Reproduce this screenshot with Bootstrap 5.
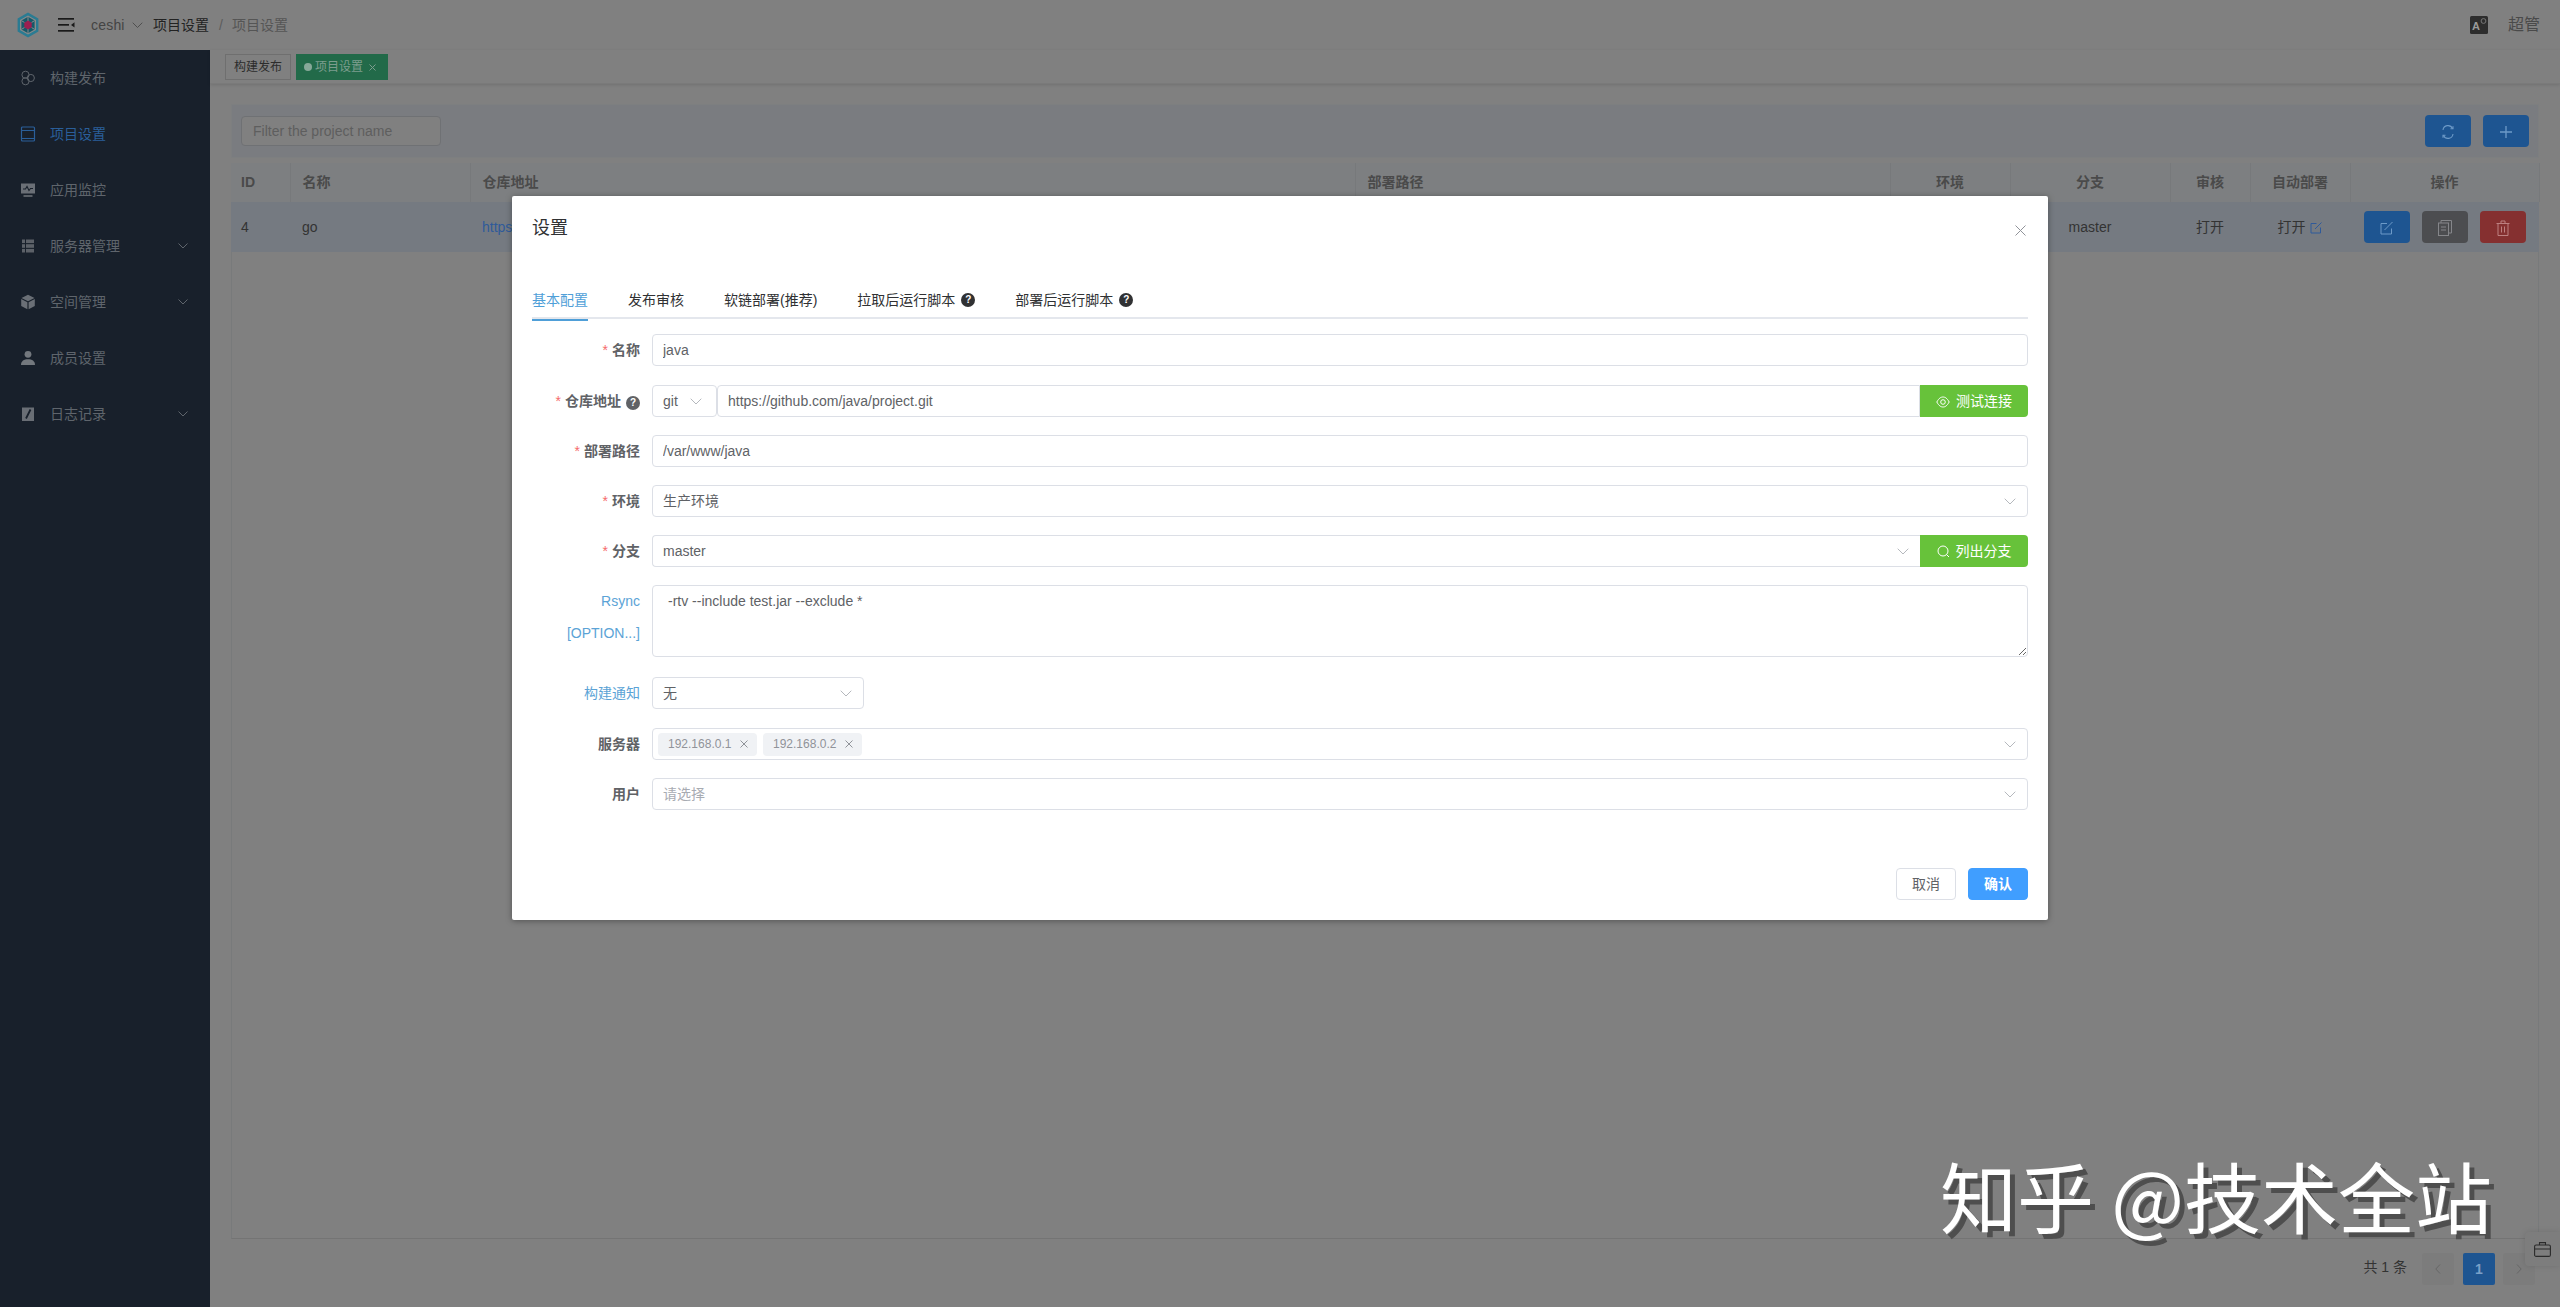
<!DOCTYPE html>
<html lang="zh-CN">
<head>
<meta charset="utf-8">
<title>项目设置</title>
<link href="https://cdn.jsdelivr.net/npm/bootstrap@5.3.0/dist/css/bootstrap.min.css" rel="stylesheet">
<style>
html,body{height:100%;}
body{font-family:"Liberation Sans","Noto Sans CJK SC",sans-serif;font-size:14px;background:#808080;color:#333;overflow:hidden;width:2560px;height:1307px;position:relative;}
.topbar{height:50px;padding-left:17px;}
.logo-box{width:22px;height:26px;margin-right:19px;}
.fold-box{width:17px;height:14px;margin-right:16px;}
.org{color:#444;width:33px;letter-spacing:.2px;}
.crumb-a{color:#222;margin-left:10px;}
.crumb-sep{color:#5c5c5c;margin:0 9px 0 10px;}
.crumb-b{color:#555;}
.top-right{padding-right:20px;}
.lang-ico{margin-right:20px;}
.who{font-size:16px;color:#4a4a4a;}
.side{width:210px;background:#18202b;flex:none;height:1257px;}
.side-link{height:56px;padding:0 22px 0 20px;color:#5f656c;font-size:14px;}
.side-link svg.ico{width:16px;height:16px;margin-right:14px;flex:none;}
.side-link.on{color:#2a5f9a;}
.side-link .lab{flex:1;}
.mainwrap{min-width:0;height:1257px;}
.tagbar{height:34px;padding:4px 15px 0;border-bottom:1px solid #7a7a7a;box-shadow:0 1px 3px rgba(0,0,0,.12);gap:5px;}
.tg{height:26px;font-size:12px;padding:0 8px;border:1px solid #6f6f6f;color:#2c2c2c;}
.tg.on{background:#226a49;border-color:#226a49;color:#7d9d8e;padding:0 11px 0 7px;}
.tg .dt{width:8px;height:8px;border-radius:50%;background:#86a898;margin-right:3px;}
.tg svg{margin-left:6px;}
.work{padding:20px 21px 0;flex:1;min-height:0;}
.tools{height:54px;background:#7a7c80;padding:0 9px;border:1px solid #7d7f80;}
.filter.form-control{width:200px;height:30px;background:#808080;border:1px solid #6f7174;border-radius:4px;font-size:14px;padding:0 11px;color:#4f4f4f;box-shadow:none;}
.filter::placeholder{color:#5e5e5e;opacity:1;}
.tool-btns{gap:12px;}
.ibtn{width:46px;height:32px;border:0;border-radius:4px;padding:0;}
.b-blue{background:#1e5591;}
.b-gray{background:#4c4d50;}
.b-red{background:#853030;}
.tablebox{margin-top:5px;flex:1;min-height:0;border:1px solid #787a7b;border-bottom-color:#747474;border-top:0;}
.grid-t{table-layout:fixed;width:2308px;margin:0 0 0 -1px;--bs-table-bg:transparent;--bs-table-color:#333;}
.grid-t th{height:39px;background:#7d7f81;color:#4a4a4a;font-weight:700;font-size:14px;padding:0 12px;border:0;border-right:1px solid #77797b;vertical-align:middle;}
.grid-t td{height:50px;background:#757a81;color:#333;font-size:14px;padding:0 12px;border:0;vertical-align:middle;}
.grid-t a{color:#2f5a9a;text-decoration:none;}
.grid-t .first{padding-left:10px;}
.row-acts{gap:12px;}
.pager{height:68px;padding:14px 4px 0 0;}
.pg-total{color:#333;margin-right:15px;}
.pg-btn{width:32px;height:32px;border-radius:2px;background:#7c7c7c;color:#5e5e5e;}
.pg-btn.on{background:#1e5591;color:#7aa0c8;font-weight:700;margin:0 8px 0 9px;}
.mark-text{position:absolute;left:1940px;top:1141px;font-family:"Noto Sans CJK SC",sans-serif;font-size:77px;line-height:1.4;font-weight:400;color:#fff;text-shadow:5px 5px 0 #4e4e4e;white-space:nowrap;z-index:1060;}
.dock{position:absolute;right:0;top:1232px;width:35px;height:34px;background:#7d7d7d;border-radius:4px 0 0 4px;box-shadow:0 0 6px rgba(0,0,0,.12);z-index:5;}
.modal.shown{position:absolute;overflow:visible;height:auto;width:2560px;top:0;left:0;z-index:1050;}
.modal-dialog.setbox{max-width:1536px;width:1536px;margin:196px auto 0;}
.setbox .modal-content{border:0;border-radius:2px;box-shadow:0 1px 6px rgba(0,0,0,.35);}
.setbox .modal-header{border:0;padding:20px 20px 0;height:64px;align-items:flex-start;}
.setbox .modal-title{font-size:18px;line-height:24px;color:#303133;font-weight:400;}
.x-close{background:none;border:0;padding:0;line-height:1;margin-top:6px;margin-right:2px;}
.setbox .modal-body{padding:18px 20px 30px;}
.tabline{height:41px;border-bottom:2px solid #e4e7ed;margin-bottom:15px;flex-wrap:nowrap;}
.tabline .tb{height:41px;margin-right:40px;padding-top:3px;color:#303133;font-size:14px;display:flex;align-items:center;position:relative;}
.tabline .tb.on{color:#4f9fd8;}
.tabline .tb.on::after{content:"";position:absolute;left:0;right:0;bottom:-2px;height:2px;background:#4f9fd8;}
.qm{display:inline-flex;align-items:center;justify-content:center;width:14px;height:14px;border-radius:50%;background:#303133;color:#fff;font-size:10px;font-weight:700;margin-left:6px;line-height:1;}
.qm.soft{background:#606266;margin-left:5px;}
.frow{margin-bottom:18px;min-height:32px;}
.frow.gap19{margin-bottom:19px;}
.frow.gap20{margin-bottom:20px;}
.flab{width:120px;flex:none;text-align:right;padding-right:12px;line-height:32px;font-weight:700;color:#606266;white-space:nowrap;}
.flab.lk{font-weight:400;color:#5ba3d6;}
.req{color:#f56c6c;font-weight:400;margin-right:4px;}
.fld.form-control{height:32px;border:1px solid #dcdfe6;border-radius:4px;font-size:14px;line-height:30px;padding:0 11px 0 10px;color:#606266;box-shadow:none;background:#fff;}
.area.form-control{height:72px;min-height:72px;border:1px solid #dcdfe6;border-radius:4px;font-size:14px;line-height:21px;padding:5px 15px;color:#606266;box-shadow:none;}
.fill{flex:1;min-width:0;}
.fld.gitsel{width:65px;flex:none;padding-right:14px;}
.fld.pl-tail{border-radius:4px 0 0 4px;}
.fld.brsel{border-radius:4px 0 0 4px;border-right:0;}
.gbtn{width:108px;height:32px;flex:none;background:#67c23a;border:0;border-radius:0 4px 4px 0;color:#fff;font-size:14px;padding:0;}
.gbtn svg{margin-right:6px;}
.tinysel{width:212px;flex:none;}
.chip{height:23px;width:99px;background:#f0f2f5;border-radius:4px;color:#909399;font-size:12px;padding-left:10px;margin-right:6px;}
.chip svg{margin-left:9px;}
.fld.chips{padding-left:5px;}
.ph{color:#a8abb2;}
.setbox .modal-footer{border:0;padding:10px 20px 20px;gap:12px;}
.setbox .modal-footer>*{margin:0;}
.bt-plain,.bt-ok{width:60px;height:32px;font-size:14px;padding:0;border-radius:4px;}
.bt-plain{background:#fff;border:1px solid #dcdfe6;color:#606266;}
.bt-ok{background:#409eff;border:1px solid #409eff;color:#fff;font-weight:700;}
</style>
</head>
<body>

<header class="topbar d-flex align-items-center">
  <svg class="logo-box" viewBox="0 0 22 26">
    <path d="M11 .6 21.400 6.500V19.500L11 25.400.6 19.500V6.500Z" fill="#2a7b92"/>
    <path d="M11 3.400 19 8V18L11 22.600 3 18V8Z" fill="#8a8a8a"/>
    <path d="M11 4.800 17.600 8.600V17.400L11 21.200 4.400 17.400V8.600Z" fill="#17596a"/>
    <path d="M11 4.800V9M17.600 8.600 14.500 10.500M17.600 17.400 14.500 15.500M11 21.200V17M4.400 17.400 7.500 15.500M4.400 8.600 7.500 10.500" stroke="#8a8a8a" stroke-width="1"/>
    <path d="M11 8.600 14.700 10.800V15.200L11 17.400 7.300 15.200V10.800Z" fill="#9c1f50"/>
  </svg>
  <svg class="fold-box" viewBox="0 0 17 14" fill="#1a1a1a"><rect width="16" height="1.700"/><rect y="6" width="11" height="1.700"/><rect y="12" width="16" height="1.700"/><path d="M16.500 4.200V9.500L13 6.900Z"/></svg>
  <span class="org">ceshi</span>
  <svg width="11" height="7" viewBox="0 0 11 7" class="ms-2" fill="none" stroke="#4f4f4f"><path d="M.7.700 5.500 5.500 10.300.7"/></svg>
  <span class="crumb-a">项目设置</span><span class="crumb-sep">/</span><span class="crumb-b">项目设置</span>
  <div class="top-right ms-auto d-flex align-items-center">
    <svg class="lang-ico" width="18" height="18" viewBox="0 0 18 18"><rect width="18" height="18" rx="1.500" fill="#2d2d2d"/><text x="2" y="14" font-family="Liberation Sans" font-size="11" font-weight="700" fill="#9a9a9a">A</text><circle cx="13.500" cy="5" r="2.400" fill="none" stroke="#777" stroke-width="1"/></svg>
    <span class="who">超管</span>
  </div>
</header>

<div class="d-flex">
  <nav class="side nav flex-column flex-nowrap">
    <a class="side-link d-flex align-items-center nav-link" href="#"><svg class="ico" viewBox="0 0 16 16" fill="none" stroke="#5f656c"><circle cx="5.500" cy="4.800" r="3.600"/><circle cx="5.500" cy="11.200" r="3.600"/><circle cx="10.800" cy="8" r="3.600"/></svg><span class="lab">构建发布</span></a>
    <a class="side-link on d-flex align-items-center nav-link" href="#"><svg class="ico" viewBox="0 0 16 16" fill="none" stroke="#2a5f9a" stroke-width="1.200"><rect x="1.500" y="1" width="13" height="14" rx="1"/><path d="M1.500 4.500H14.500M1.500 12.500H14.500"/></svg><span class="lab">项目设置</span></a>
    <a class="side-link d-flex align-items-center nav-link" href="#"><svg class="ico" viewBox="0 0 16 16"><path d="M1 1.500H15V11.500H1Z" fill="#6a6f76"/><path d="M3 7H5.500L7 4.500 9 8.500 10.500 6.500H13" fill="none" stroke="#18202b" stroke-width="1.100"/><rect x="3.500" y="13.200" width="9" height="1.600" fill="#6a6f76"/></svg><span class="lab">应用监控</span></a>
    <a class="side-link d-flex align-items-center nav-link" href="#"><svg class="ico" viewBox="0 0 16 16" fill="#5c6168"><rect x="2" y="1.500" width="3" height="3.600"/><rect x="6" y="1.500" width="8" height="3.600"/><rect x="2" y="6.200" width="3" height="3.600"/><rect x="6" y="6.200" width="8" height="3.600"/><rect x="2" y="10.900" width="3" height="3.600"/><rect x="6" y="10.900" width="8" height="3.600"/></svg><span class="lab">服务器管理</span><svg width="10" height="6" viewBox="0 0 10 6" fill="none" stroke="#5f656c"><path d="M.5.500 5 5 9.500.5"/></svg></a>
    <a class="side-link d-flex align-items-center nav-link" href="#"><svg class="ico" viewBox="0 0 16 16" fill="#6a6f76"><path d="M8 .8 14.500 4 8 7.200 1.500 4Z"/><path d="M1.200 5.100 7.400 8.300V15.200L1.200 12Z"/><path d="M14.800 5.100 8.600 8.300V15.200L14.800 12Z"/></svg><span class="lab">空间管理</span><svg width="10" height="6" viewBox="0 0 10 6" fill="none" stroke="#5f656c"><path d="M.5.500 5 5 9.500.5"/></svg></a>
    <a class="side-link d-flex align-items-center nav-link" href="#"><svg class="ico" viewBox="0 0 16 16" fill="#73787e"><circle cx="8" cy="4.300" r="3.400"/><path d="M1 15C1 11 4 9.300 8 9.300S15 11 15 15Z"/></svg><span class="lab">成员设置</span></a>
    <a class="side-link d-flex align-items-center nav-link" href="#"><svg class="ico" viewBox="0 0 16 16"><rect x="2" y="1.500" width="12" height="13.500" fill="#696e75"/><path d="M10.500 3.500 6 12.500" stroke="#18202b" stroke-width="1.800"/></svg><span class="lab">日志记录</span><svg width="10" height="6" viewBox="0 0 10 6" fill="none" stroke="#5f656c"><path d="M.5.500 5 5 9.500.5"/></svg></a>
  </nav>

  <main class="mainwrap flex-grow-1 d-flex flex-column">
    <div class="tagbar d-flex align-items-start">
      <div class="tg d-flex align-items-center">构建发布</div>
      <div class="tg on d-flex align-items-center"><span class="dt"></span>项目设置<svg width="7" height="7" viewBox="0 0 7 7" stroke="#7d9d8e" fill="none"><path d="M.5.500 6.500 6.500M6.500.5.500 6.500"/></svg></div>
    </div>
    <div class="work d-flex flex-column">
      <div class="tools d-flex align-items-center justify-content-between">
        <input class="filter form-control" type="text" placeholder="Filter the project name">
        <div class="tool-btns d-flex">
          <button class="ibtn b-blue" aria-label="刷新"><svg width="14" height="16" viewBox="0 0 14 16" fill="none" stroke="#6d9ac8" stroke-width="1.100"><path d="M2 6A5 5 0 0 1 11.500 4.500M12 10A5 5 0 0 1 2.500 11.500"/><path d="M9.500 4.800H12V2.200M4.500 11.200H2V13.800"/></svg></button>
          <button class="ibtn b-blue" aria-label="新增"><svg width="14" height="14" viewBox="0 0 14 14" stroke="#6d9ac8" stroke-width="1.300"><path d="M7 1V13M1 7H13"/></svg></button>
        </div>
      </div>
      <div class="tablebox d-flex flex-column">
        <table class="table grid-t">
          <colgroup><col width="59"><col width="180"><col width="885"><col width="535"><col width="120"><col width="160"><col width="80"><col width="100"><col width="189"></colgroup>
          <thead><tr>
            <th class="first">ID</th><th>名称</th><th>仓库地址</th><th>部署路径</th><th class="text-center">环境</th><th class="text-center">分支</th><th class="text-center">审核</th><th class="text-center">自动部署</th><th class="text-center">操作</th>
          </tr></thead>
          <tbody><tr>
            <td class="first">4</td><td>go</td><td><a href="#">https</a></td><td></td><td></td><td class="text-center">master</td><td class="text-center">打开</td>
            <td class="text-center">打开<svg width="13" height="13" viewBox="0 0 13 13" fill="none" stroke="#2f5a9a" class="ms-1"><path d="M10.500 6.500V12H1V2.500H6.500"/><path d="M5 8 11.500 1.500"/></svg></td>
            <td><div class="row-acts d-flex justify-content-center">
              <button class="ibtn b-blue" aria-label="编辑"><svg width="14" height="14" viewBox="0 0 14 14" fill="none" stroke="#6d9ac8"><path d="M11.500 7.500V13H1V2.500H7"/><path d="M4.500 9 12.500 1"/></svg></button>
              <button class="ibtn b-gray" aria-label="复制"><svg width="14" height="16" viewBox="0 0 14 16" fill="none" stroke="#85868a"><rect x=".5" y="3" width="10" height="12.500"/><path d="M3 3V.5H13.500V13H10.500M3 7H8M3 10H8"/></svg></button>
              <button class="ibtn b-red" aria-label="删除"><svg width="14" height="16" viewBox="0 0 14 16" fill="none" stroke="#bd8080"><path d="M.5 3.500H13.500M5 3.500V1H9V3.500M2 3.500V15.500H12V3.500M5.500 6.500V12.500M8.500 6.500V12.500"/></svg></button>
            </div></td>
          </tr></tbody>
        </table>
      </div>
      <div class="pager d-flex justify-content-end align-items-start">
        <span class="pg-total lh-lg">共 1 条</span>
        <div class="pg-btn d-flex align-items-center justify-content-center"><svg width="6" height="10" viewBox="0 0 6 10" fill="none" stroke="#666"><path d="M5 .5.800 5 5 9.500"/></svg></div>
        <div class="pg-btn on d-flex align-items-center justify-content-center">1</div>
        <div class="pg-btn d-flex align-items-center justify-content-center"><svg width="6" height="10" viewBox="0 0 6 10" fill="none" stroke="#666"><path d="M1 .5 5.200 5 1 9.500"/></svg></div>
      </div>
    </div>
  </main>
</div>

<div class="dock d-flex align-items-center justify-content-center">
  <svg width="17" height="15" viewBox="0 0 17 15" fill="none" stroke="#2b2b2b" stroke-width="1.100"><rect x=".6" y="3" width="15.800" height="11.400" rx="1.500"/><path d="M5.500 3V.6H11.500V3M.6 7H16.400"/></svg>
</div>

<div class="modal shown d-block" tabindex="-1">
  <div class="modal-dialog setbox">
    <div class="modal-content">
      <div class="modal-header justify-content-between">
        <h5 class="modal-title">设置</h5>
        <button class="x-close" aria-label="关闭"><svg width="11" height="11" viewBox="0 0 11 11" stroke="#909399" fill="none"><path d="M.5.500 10.500 10.500M10.500.5.500 10.500"/></svg></button>
      </div>
      <div class="modal-body">
        <div class="tabline nav">
          <div class="tb on">基本配置</div>
          <div class="tb">发布审核</div>
          <div class="tb">软链部署(推荐)</div>
          <div class="tb">拉取后运行脚本<span class="qm">?</span></div>
          <div class="tb">部署后运行脚本<span class="qm">?</span></div>
        </div>

        <div class="frow gap19 d-flex"><div class="flab"><span class="req">*</span>名称</div><input class="fld form-control fill" value="java"></div>

        <div class="frow d-flex"><div class="flab"><span class="req">*</span>仓库地址<span class="qm soft">?</span></div>
          <div class="fill d-flex">
            <div class="fld form-control gitsel d-flex align-items-center justify-content-between">git<svg width="12" height="7" viewBox="0 0 12 7" fill="none" stroke="#b5b8bd"><path d="M.7.700 6 6 11.300.7"/></svg></div>
            <input class="fld form-control pl-tail fill" value="https://github.com/java/project.git">
            <button class="gbtn"><svg width="14" height="12" viewBox="0 0 14 12" fill="none" stroke="#fff"><path d="M.8 6C3 2 5 1 7 1s4 1 6.200 5C11 10 9 11 7 11S3 10 .8 6Z"/><circle cx="7" cy="6" r="2.300"/></svg>测试连接</button>
          </div>
        </div>

        <div class="frow d-flex"><div class="flab"><span class="req">*</span>部署路径</div><input class="fld form-control fill" value="/var/www/java"></div>

        <div class="frow d-flex"><div class="flab"><span class="req">*</span>环境</div>
          <div class="fld form-control fill d-flex align-items-center justify-content-between">生产环境<svg width="12" height="7" viewBox="0 0 12 7" fill="none" stroke="#b5b8bd"><path d="M.7.700 6 6 11.300.7"/></svg></div>
        </div>

        <div class="frow d-flex"><div class="flab"><span class="req">*</span>分支</div>
          <div class="fill d-flex">
            <div class="fld form-control brsel fill d-flex align-items-center justify-content-between">master<svg width="12" height="7" viewBox="0 0 12 7" fill="none" stroke="#b5b8bd"><path d="M.7.700 6 6 11.300.7"/></svg></div>
            <button class="gbtn"><svg width="13" height="13" viewBox="0 0 13 13" fill="none" stroke="#fff"><circle cx="6" cy="6" r="5"/><path d="M9.500 9.500 12 12"/></svg>列出分支</button>
          </div>
        </div>

        <div class="frow gap20 d-flex"><div class="flab lk">Rsync<br>[OPTION...]</div><textarea class="area form-control fill">-rtv --include test.jar --exclude *</textarea></div>

        <div class="frow gap19 d-flex"><div class="flab lk">构建通知</div>
          <div class="fld form-control tinysel d-flex align-items-center justify-content-between">无<svg width="12" height="7" viewBox="0 0 12 7" fill="none" stroke="#b5b8bd"><path d="M.7.700 6 6 11.300.7"/></svg></div>
        </div>

        <div class="frow d-flex"><div class="flab">服务器</div>
          <div class="fld chips form-control fill d-flex align-items-center">
            <span class="chip d-flex align-items-center">192.168.0.1<svg width="8" height="8" viewBox="0 0 8 8" stroke="#909399" fill="none"><path d="M.5.500 7.500 7.500M7.500.5.500 7.500"/></svg></span>
            <span class="chip d-flex align-items-center">192.168.0.2<svg width="8" height="8" viewBox="0 0 8 8" stroke="#909399" fill="none"><path d="M.5.500 7.500 7.500M7.500.5.500 7.500"/></svg></span>
            <svg class="ms-auto" width="12" height="7" viewBox="0 0 12 7" fill="none" stroke="#b5b8bd"><path d="M.7.700 6 6 11.300.7"/></svg>
          </div>
        </div>

        <div class="frow d-flex"><div class="flab">用户</div>
          <div class="fld form-control fill d-flex align-items-center justify-content-between"><span class="ph">请选择</span><svg width="12" height="7" viewBox="0 0 12 7" fill="none" stroke="#b5b8bd"><path d="M.7.700 6 6 11.300.7"/></svg></div>
        </div>
      </div>
      <div class="modal-footer">
        <button class="bt-plain">取消</button>
        <button class="bt-ok">确认</button>
      </div>
    </div>
  </div>
</div>

<div class="mark-text">知乎 @技术全站</div>

<script src="https://cdn.jsdelivr.net/npm/bootstrap@5.3.0/dist/js/bootstrap.bundle.min.js"></script>
</body>
</html>
